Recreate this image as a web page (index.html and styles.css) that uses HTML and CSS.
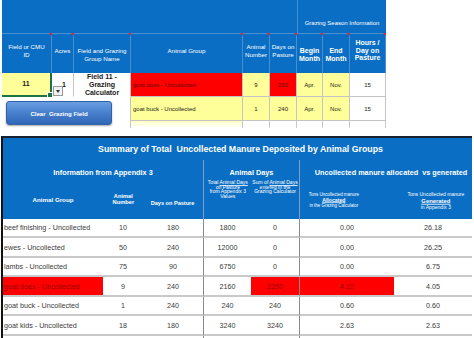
FILE: index.html
```html
<!DOCTYPE html>
<html>
<head>
<meta charset="utf-8">
<title>Grazing Calculator</title>
<link rel="stylesheet" href="styles.css">
</head>
<body>
<div class="calc">
  <div class="band band-left"></div>
  <div class="band band-right">Grazing Season Information</div>

  <div class="hd mk">Field or CMU<br>ID</div>
  <div class="hd mk">Acres</div>
  <div class="hd mk low">Field and Grazing<br>Group Name</div>
  <div class="hd mk">Animal Group</div>
  <div class="hd mk">Animal<br>Number</div>
  <div class="hd mk">Days on<br>Pasture</div>
  <div class="hd b mk low">Begin<br>Month</div>
  <div class="hd b mk low">End<br>Month</div>
  <div class="hd b mk">Hours /<br>Day on<br>Pasture</div>

  <div class="cell yellow bold sel">11</div>
  <div class="cell acres bold"><span class="acre-val">1</span><span class="dd"></span></div>
  <div class="cell bold name">Field 11 -<br>Grazing<br>Calculator</div>
  <div class="cell red left">goat does - Uncollected</div>
  <div class="cell yellow">9</div>
  <div class="cell red">250</div>
  <div class="cell yellow">Apr.</div>
  <div class="cell yellow">Nov.</div>
  <div class="cell">15</div>

  <div class="btn-cell"><button class="btn">Clear&nbsp; Grazing Field</button></div>
  <div class="cell yellow left">goat buck - Uncollected</div>
  <div class="cell yellow">1</div>
  <div class="cell yellow">240</div>
  <div class="cell yellow">Apr.</div>
  <div class="cell yellow">Nov.</div>
  <div class="cell">15</div>

  <div class="part pale"></div>
  <div class="part"></div>
  <div class="part"></div>
  <div class="part"></div>
  <div class="part"></div>
  <div class="part"></div>
</div>

<div class="summary">
  <div class="s-title">Summary of Total&nbsp; Uncollected Manure Deposited by Animal Groups</div>
  <div class="s-sub g1">Information from Appendix 3</div>
  <div class="s-sub g2 dvh">Animal Days</div>
  <div class="s-sub g3 dvh">Uncollected manure allocated&nbsp; vs generated</div>

  <div class="s-ch ag">Animal Group</div>
  <div class="s-ch an"><span class="sc">Animal<br>Number</span></div>
  <div class="s-ch dp"><span class="sc">Days on Pasture</span></div>
  <div class="s-ch tiny dvh"><span class="sc">Total <u>Animal Days</u><br>on Pasture<br>from Appendix 3<br>Values</span></div>
  <div class="s-ch tiny"><span class="sc">Sum of <u>Animal Days</u><br>entered in the<br>Grazing Calculator</span></div>
  <div class="s-ch tons alloc dvh"><span class="sc">Tons Uncollected manure<br><b><u>Allocated</u></b><br>in the Grazing Calculator</span></div>
  <div class="s-ch tons gen"><span class="sc">Tons Uncollected manure<br><b><u>Generated</u></b><br>in Appendix 3</span></div>

  <div class="d name">beef finishing - Uncollected</div>
  <div class="d">10</div>
  <div class="d">180</div>
  <div class="d dv">1800</div>
  <div class="d">0</div>
  <div class="d dv">0.00</div>
  <div class="d">26.18</div>

  <div class="d name">ewes - Uncollected</div>
  <div class="d">50</div>
  <div class="d">240</div>
  <div class="d dv">12000</div>
  <div class="d">0</div>
  <div class="d dv">0.00</div>
  <div class="d">26.25</div>

  <div class="d name">lambs - Uncollected</div>
  <div class="d">75</div>
  <div class="d">90</div>
  <div class="d dv">6750</div>
  <div class="d">0</div>
  <div class="d dv">0.00</div>
  <div class="d">6.75</div>

  <div class="d name red">goat does - Uncollected</div>
  <div class="d">9</div>
  <div class="d">240</div>
  <div class="d dv">2160</div>
  <div class="d red">2250</div>
  <div class="d dv red">4.22</div>
  <div class="d">4.05</div>

  <div class="d name">goat buck - Uncollected</div>
  <div class="d">1</div>
  <div class="d">240</div>
  <div class="d dv">240</div>
  <div class="d">240</div>
  <div class="d dv">0.60</div>
  <div class="d">0.60</div>

  <div class="d name">goat kids - Uncollected</div>
  <div class="d">18</div>
  <div class="d">180</div>
  <div class="d dv">3240</div>
  <div class="d">3240</div>
  <div class="d dv">2.63</div>
  <div class="d">2.63</div>

  <div class="d name"></div>
  <div class="d"></div>
  <div class="d"></div>
  <div class="d dv"></div>
  <div class="d"></div>
  <div class="d dv"></div>
  <div class="d"></div>
</div>
</body>
</html>
```

FILE: styles.css
```css
* {
  box-sizing: border-box;
  margin: 0;
  padding: 0;
}

html,
body {
  background: #ffffff;
}

body {
  width: 474px;
  height: 338px;
  overflow: hidden;
  font-family: "Liberation Sans", Arial, sans-serif;
  color: #222222;
}

/* ---------- top grazing calculator table ---------- */

.calc {
  display: grid;
  grid-template-columns: 50px 22px 57px 112px 27px 27px 26px 27px 36px;
  grid-template-rows: 34px 39px 24px 24px 7px;
  width: 384px;
  margin-left: 2px;
}

.band {
  background: #0a6ec4;
  border-bottom: 1px solid #4a8fd0;
}

.band-left {
  grid-column: 1 / 7;
}

.band-right {
  grid-column: 7 / 10;
  border-left: 1px solid #4a8fd0;
  color: #ffffff;
  font-size: 6px;
  display: flex;
  align-items: flex-end;
  justify-content: center;
  padding-bottom: 7px;
}

.hd {
  position: relative;
  background: #0a6ec4;
  color: #ffffff;
  font-size: 6.2px;
  line-height: 7.5px;
  text-align: center;
  display: flex;
  align-items: center;
  justify-content: center;
  padding-bottom: 6px;
  border-right: 1px solid #4a8fd0;
}

.hd.b {
  font-weight: bold;
  font-size: 7px;
  line-height: 7.8px;
}

.hd.low {
  padding-top: 8px;
}

.mk::after {
  content: "";
  position: absolute;
  top: -1px;
  right: -1px;
  border-top: 3px solid #e3262f;
  border-left: 3px solid transparent;
}

.cell {
  display: flex;
  align-items: center;
  justify-content: center;
  text-align: center;
  font-size: 6px;
  color: #1a1a1a;
  background: #ffffff;
  border-right: 1px solid #c4c4c4;
  border-bottom: 1px solid #c4c4c4;
}

.yellow {
  background: #ffff99;
}

.red {
  background: #ff0000;
  color: #6e0000;
}

.left {
  justify-content: flex-start;
  padding-left: 2px;
}

.bold {
  font-weight: bold;
  font-size: 7px;
  line-height: 8px;
}

.sel {
  position: relative;
  border-right: 2px solid #1f7244;
  border-bottom: 2px solid #1f7244;
}

.sel::after {
  content: "";
  position: absolute;
  right: -3px;
  bottom: -3px;
  width: 4px;
  height: 4px;
  background: #1f7244;
  border: 1px solid #ffffff;
}

.acres {
  position: relative;
  border-bottom-color: #ffffff;
  align-items: flex-start;
  padding-top: 8px;
  padding-left: 3px;
}

.dd {
  position: absolute;
  left: 1px;
  bottom: 0;
  width: 10px;
  height: 10px;
  background: #f2f2f2;
  border: 1px solid #9a9a9a;
}

.dd::after {
  content: "";
  position: absolute;
  left: 2px;
  top: 3px;
  border-top: 3px solid #333333;
  border-left: 2.5px solid transparent;
  border-right: 2.5px solid transparent;
}

.name {
  border-bottom-color: #ffffff;
}

.btn-cell {
  grid-column: 1 / 4;
  grid-row: 4 / 6;
  background: #ffffff;
  border-right: 1px solid #c4c4c4;
  padding: 4px 0 0 4px;
}

.btn {
  display: block;
  width: 106px;
  height: 24px;
  border: 1px solid #2f62a8;
  border-radius: 3px;
  background: linear-gradient(#6b9ee0, #4a82cf 45%, #2f66b6);
  box-shadow: 0 1px 2px rgba(0, 0, 0, 0.35);
  color: #ffffff;
  font-family: "Liberation Sans", Arial, sans-serif;
  font-weight: bold;
  font-size: 6.1px;
}

.part {
  border-right: 1px solid #c8c8c8;
  background: #ffffff;
}

.part.pale {
  background: linear-gradient(#ffffc4, #ffffff);
}

/* ---------- summary table ---------- */

.summary {
  display: grid;
  grid-template-columns: 100px 40px 60px 48px 48px 95px 78px;
  grid-template-rows: 22px 20px 39px 19px 20px 19px 20px 19px 20px 20px;
  width: 471px;
  margin-top: 8px;
  margin-left: 1px;
  border-top: 2px solid #172232;
  border-left: 2px solid #111111;
}

.s-title {
  grid-column: 1 / -1;
  background: #0a6ec4;
  color: #ffffff;
  font-weight: bold;
  font-size: 8.8px;
  display: flex;
  align-items: center;
  justify-content: center;
  padding-left: 6px;
}

.s-sub {
  background: #0a6ec4;
  color: #ffffff;
  font-weight: bold;
  font-size: 7.3px;
  display: flex;
  align-items: center;
  justify-content: center;
  padding-top: 4px;
}

.g1 {
  grid-column: 1 / 4;
}

.g2 {
  grid-column: 4 / 6;
}

.g3 {
  grid-column: 6 / 8;
  padding-left: 10px;
}

.dvh {
  border-left: 1px solid #7d9ec4;
}

.s-ch {
  background: #0a6ec4;
  color: #ffffff;
  text-align: center;
  display: flex;
  justify-content: center;
  align-items: flex-start;
}

.sc {
  display: block;
  white-space: nowrap;
  font-size: 6px;
  line-height: 7px;
}

.ag {
  align-items: center;
  font-weight: bold;
  font-size: 6.2px;
}

.an {
  padding-top: 13px;
  font-weight: bold;
}

.an .sc {
  transform: scale(0.95);
  transform-origin: center top;
}

.dp {
  padding-top: 20px;
  font-weight: bold;
}

.dp .sc {
  transform: scale(0.93);
  transform-origin: center top;
}

.tiny {
  padding-top: 1px;
}

.tiny .sc {
  line-height: 5.2px;
  transform: scale(0.84);
  transform-origin: center top;
}

.tons {
  padding-top: 12px;
}

.tons .sc {
  line-height: 7px;
}

.tons b {
  font-size: 7px;
}

.alloc {
  padding-right: 26px;
}

.alloc .sc {
  transform: scale(0.74);
  transform-origin: center top;
}

.gen {
  padding-left: 6px;
}

.gen .sc {
  transform: scale(0.84);
  transform-origin: center top;
}

.d {
  display: flex;
  align-items: center;
  justify-content: center;
  font-size: 7.2px;
  color: #3a3a3a;
  background: #ffffff;
  border-bottom: 2px solid #c9c9c9;
}

.d.name {
  justify-content: flex-start;
  padding-left: 1px;
}

.d.dv {
  border-left: 1px solid #8a8a8a;
}

.d.red {
  background: #ff0000;
  color: #9a0000;
}
```
